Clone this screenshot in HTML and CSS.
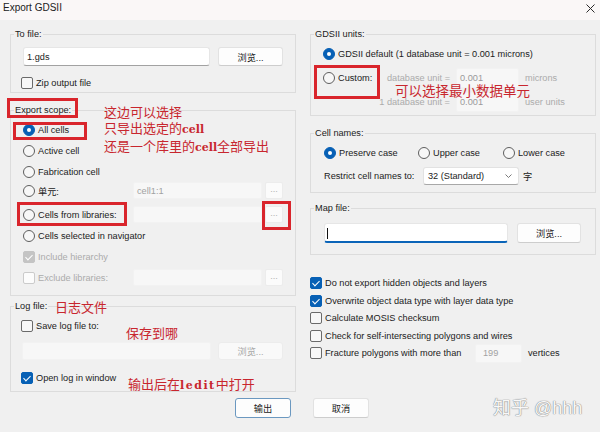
FILE: index.html
```html
<!DOCTYPE html>
<html lang="zh-CN">
  <head>
    <meta charset="UTF-8">
    <title>Export GDSII</title>
    <link rel="stylesheet" href="styles.css">
  </head>
  <body>
    <div class="dialog">
      <div class="titlebar">
        <span class="title">Export GDSII</span>
        <svg class="close" width="9" height="9" viewBox="0 0 9 9">
          <path d="M0.5 0.5L8.5 8.5M8.5 0.5L0.5 8.5" stroke="#2a2a2a" stroke-width="1"/>
        </svg>
      </div>

      <div class="content">
        <div class="column">
          <fieldset class="group file-group">
            <legend>To file:</legend>
            <div class="group-body">
              <div class="file-row">
                <div class="textbox">1.gds</div>
                <button class="btn">浏览...</button>
              </div>
              <div class="option zip-line"><span class="check"></span>Zip output file</div>
            </div>
          </fieldset>

          <fieldset class="group scope-group">
            <legend>Export scope:</legend>
            <div class="group-body">
              <div class="option row"><span class="radio on"></span>All cells</div>
              <div class="option row"><span class="radio"></span>Active cell</div>
              <div class="option row"><span class="radio"></span>Fabrication cell</div>
              <div class="row pick short">
                <span class="option"><span class="radio"></span>单元:</span>
                <span class="field">cell1:1</span>
                <span class="mini-btn">...</span>
              </div>
              <div class="row pick lib">
                <span class="option"><span class="radio"></span>Cells from libraries:</span>
                <span class="field"></span>
                <span class="mini-btn">...</span>
              </div>
              <div class="option row"><span class="radio"></span>Cells selected in navigator</div>
              <div class="option row muted"><span class="check on dim"></span>Include hierarchy</div>
              <div class="row pick">
                <span class="option muted"><span class="check dim"></span>Exclude libraries:</span>
                <span class="field"></span>
                <span class="mini-btn">...</span>
              </div>
            </div>
          </fieldset>

          <fieldset class="group log-group">
            <legend>Log file:</legend>
            <div class="group-body">
              <div class="option log-line"><span class="check"></span>Save log file to:</div>
              <div class="file-row log-file">
                <span class="field"></span>
                <button class="btn" disabled>浏览...</button>
              </div>
              <div class="option log-line open-line"><span class="check on"></span>Open log in window</div>
            </div>
          </fieldset>
        </div>

        <div class="column">
          <fieldset class="group units-group">
            <legend>GDSII units:</legend>
            <div class="group-body units-grid">
              <div class="option span-all"><span class="radio on"></span>GDSII default (1 database unit = 0.001 microns)</div>
              <div class="option"><span class="radio"></span>Custom:</div>
              <span class="muted unit-label">database unit =</span>
              <span class="field">0.001</span>
              <span class="muted">microns</span>
              <span></span>
              <span class="muted unit-label">1 database unit =</span>
              <span class="field">0.001</span>
              <span class="muted">user units</span>
            </div>
          </fieldset>

          <fieldset class="group names-group">
            <legend>Cell names:</legend>
            <div class="group-body">
              <div class="case-row">
                <div class="option"><span class="radio on"></span>Preserve case</div>
                <div class="option"><span class="radio"></span>Upper case</div>
                <div class="option"><span class="radio"></span>Lower case</div>
              </div>
              <div class="restrict-row">
                <span class="restrict-label">Restrict cell names to:</span>
                <div class="select">
                  32 (Standard)
                  <svg width="7" height="4" viewBox="0 0 7 4">
                    <path d="M0.5 0.5L3.5 3.5L6.5 0.5" fill="none" stroke="#6b6b6b" stroke-width="0.9"/>
                  </svg>
                </div>
                <span class="unit-char">字</span>
              </div>
            </div>
          </fieldset>

          <fieldset class="group map-group">
            <legend>Map file:</legend>
            <div class="group-body">
              <div class="map-row">
                <div class="textbox focused"><span class="caret"></span></div>
                <button class="btn">浏览...</button>
              </div>
            </div>
          </fieldset>

          <div class="options">
            <div class="option check-line"><span class="check on"></span>Do not export hidden objects and layers</div>
            <div class="option check-line"><span class="check on"></span>Overwrite object data type with layer data type</div>
            <div class="option check-line"><span class="check"></span>Calculate MOSIS checksum</div>
            <div class="option check-line"><span class="check"></span>Check for self-intersecting polygons and wires</div>
            <div class="option check-line">
              <span class="check"></span>
              <span class="fracture-label">Fracture polygons with more than</span>
              <span class="field count">199</span>
              <span class="vertices">vertices</span>
            </div>
          </div>
        </div>
      </div>

      <div class="footer">
        <button class="btn default">输出</button>
        <button class="btn">取消</button>
      </div>

      <!-- annotations drawn over the dialog -->
      <div class="mark mark-scope"></div>
      <div class="mark mark-all"></div>
      <div class="mark mark-libs"></div>
      <div class="mark mark-libs-btn"></div>
      <div class="mark mark-custom"></div>

      <div class="note note-scope">这边可以选择<br>只导出选定的<b>cell</b><br>还是一个库里的<b>cell</b>全部导出</div>
      <div class="note note-units">可以选择最小数据单元</div>
      <div class="note note-log">日志文件</div>
      <div class="note note-save">保存到哪</div>
      <div class="note note-open">输出后在<b class="wide">ledit</b>中打开</div>

      <div class="watermark">知乎 @hhh</div>
    </div>
  </body>
</html>
```

FILE: styles.css
```css
* {
  box-sizing: border-box;
}

body {
  margin: 0;
  font-family: "Liberation Sans", "Noto Sans CJK SC", Arial, sans-serif;
  font-size: 9.2px;
  color: #1b1b1b;
  background-color: #f0f0f0;
}

.dialog {
  position: relative;
  width: 600px;
  height: 432px;
  overflow: hidden;
  background-color: #f0f0f0;
}

.titlebar {
  display: flex;
  justify-content: space-between;
  height: 20px;
  padding: 2px 5px 0 3px;
  background-color: #faf7f7;
}

.title {
  font-size: 10px;
  line-height: 12px;
}

.close {
  margin-top: 2px;
}

.content {
  display: grid;
  grid-template-columns: 286px 286px;
  column-gap: 14px;
  padding-left: 10px;
}

/* group boxes */
.group {
  margin: 0;
  padding: 0;
  min-width: 0;
  border: 1px solid #dcdcdc;
}

.group legend {
  margin-left: 3px;
  padding: 0 1px;
  line-height: 12px;
}

.group-body {
  padding: 4px 0 3px 12px;
}

.option {
  display: flex;
  align-items: center;
  white-space: nowrap;
}

.muted {
  color: #ababab;
}

/* radios and checkboxes */
.radio,
.check {
  flex: none;
  position: relative;
  width: 12px;
  height: 12px;
  margin-right: 3px;
  border: 1px solid #5e5e5e;
  background-color: #f7f7f7;
}

.radio {
  border-radius: 50%;
}

.radio.on {
  border-color: #0760b5;
  background-color: #0760b5;
}

.radio.on::after {
  content: "";
  position: absolute;
  left: 3px;
  top: 3px;
  width: 4px;
  height: 4px;
  border-radius: 50%;
  background-color: #fff;
}

.check {
  border-radius: 2px;
  border-color: #6a6a6a;
}

.check.on {
  border-color: #0760b5;
  background-color: #0760b5;
}

.check.on::after {
  content: "";
  position: absolute;
  left: 3.3px;
  top: 1px;
  width: 3px;
  height: 6px;
  border: solid #fff;
  border-width: 0 1.2px 1.2px 0;
  transform: rotate(45deg);
}

.check.dim {
  border-color: #cbcbcb;
  background-color: #fcfcfc;
}

.check.on.dim {
  border-color: #c4c4c4;
  background-color: #c4c4c4;
}

/* inputs and buttons */
.textbox {
  position: relative;
  height: 19px;
  padding: 0 3px;
  line-height: 18px;
  background-color: #fff;
  border: 1px solid #e6e6e6;
  border-bottom-color: #a2a2a2;
  border-radius: 3px;
}

.textbox.focused {
  border-bottom: 2px solid #0a64b8;
}

.caret {
  position: absolute;
  left: 2px;
  top: 4px;
  width: 1px;
  height: 11px;
  background-color: #111;
}

.field {
  display: block;
  height: 17px;
  padding: 0 3px;
  line-height: 16px;
  color: #a2a2a2;
  background-color: #f7f7f7;
  border: 1px solid #f2f2f2;
  border-radius: 2px;
}

.btn {
  height: 19px;
  padding: 0;
  font: inherit;
  color: #1b1b1b;
  background-color: #fdfdfd;
  border: 1px solid #e2e2e2;
  border-bottom-color: #cdcdcd;
  border-radius: 3px;
}

.btn:disabled {
  color: #a8a8a8;
  background-color: #f9f9f9;
  border-color: #ececec;
}

.btn.default {
  border: 1px solid #6b98c0;
}

.mini-btn {
  display: block;
  height: 17px;
  line-height: 13px;
  text-align: center;
  color: #b3b3b3;
  background-color: #fbfbfb;
  border: 1px solid #ececec;
  border-radius: 2px;
}

/* left column */
.file-group {
  margin-top: 8px;
}

.file-group .group-body {
  padding: 7px 0 3px 12px;
}

.file-row {
  display: grid;
  grid-template-columns: 187px 65px;
  column-gap: 8px;
  height: 19px;
}

.zip-line {
  height: 12px;
  margin: 11px 0 0 -2px;
}

.scope-group {
  margin-top: 11px;
}

.scope-group .group-body {
  padding: 3px 0 7px 12px;
}

.row {
  height: 21px;
}

.pick {
  display: grid;
  grid-template-columns: 107px 129px 18px;
  column-gap: 3px;
  align-items: center;
}

.pick.short {
  height: 17px;
}

.pick.lib {
  height: 26px;
  padding-top: 5px;
}

.log-group {
  margin-top: 4px;
}

.log-group .group-body {
  padding: 4px 0 3px 10px;
}

.log-line {
  height: 20px;
}

.log-file {
  grid-template-columns: 189px 65px;
  column-gap: 7px;
  height: 18px;
  margin: 6px 0 0 1px;
}

.log-file .field {
  height: 18px;
}

.log-file .btn {
  height: 18px;
}

.open-line {
  margin-top: 8px;
}

/* right column */
.units-group {
  margin-top: 8px;
}

.units-grid {
  display: grid;
  grid-template-columns: 50px 71px 63px auto;
  grid-auto-rows: 20px;
  column-gap: 6px;
  row-gap: 4px;
  align-items: center;
}

.span-all {
  grid-column: 1 / -1;
}

.unit-label {
  text-align: right;
  white-space: nowrap;
}

.units-grid .field {
  height: 20px;
  line-height: 18px;
  color: #9a9a9a;
}

.names-group {
  margin-top: 11px;
}

.names-group .group-body {
  padding: 4px 0 7px 13px;
}

.case-row {
  display: grid;
  grid-template-columns: 94px 85px auto;
  height: 20px;
  align-items: center;
}

.restrict-row {
  display: flex;
  align-items: center;
  height: 18px;
  margin-top: 4px;
}

.restrict-label {
  flex: none;
  width: 99px;
}

.select {
  display: flex;
  justify-content: space-between;
  align-items: center;
  width: 96px;
  height: 18px;
  padding: 0 6px 0 4px;
  background-color: #fff;
  border: 1px solid #e2e2e2;
  border-bottom-color: #a8a8a8;
  border-radius: 3px;
}

.unit-char {
  margin-left: 4px;
}

.map-group {
  margin-top: 9px;
}

.map-group .group-body {
  padding: 9px 0 11px 13px;
}

.map-row {
  display: grid;
  grid-template-columns: 184px 64px;
  column-gap: 9px;
  height: 20px;
}

.map-row .textbox,
.map-row .btn {
  height: 20px;
}

.options {
  margin-top: 19.5px;
}

.check-line {
  height: 17.5px;
}

.fracture-label {
  width: 147px;
}

.field.count {
  width: 47px;
  height: 19px;
  margin-left: 3px;
  padding-left: 7px;
  line-height: 17px;
}

.vertices {
  margin-left: 6px;
}

.footer {
  display: flex;
  justify-content: center;
  gap: 22px;
  margin-top: 6px;
  padding-left: 4px;
}

.footer .btn {
  width: 56px;
  height: 20px;
}

/* red annotation boxes and notes */
.mark {
  position: absolute;
  border: 3px solid #d9252c;
}

.mark-scope { left: 7px; top: 98px; width: 71px; height: 20px; }
.mark-all { left: 13px; top: 122px; width: 74px; height: 18px; }
.mark-libs { left: 17px; top: 202px; width: 110px; height: 24px; }
.mark-libs-btn { left: 262px; top: 201px; width: 29px; height: 29px; }
.mark-custom { left: 314px; top: 65px; width: 66px; height: 34px; }

.note {
  position: absolute;
  font-family: "Noto Sans CJK SC", sans-serif;
  font-size: 13px;
  line-height: 16px;
  color: #c8262e;
  white-space: nowrap;
}

.note b {
  font-family: "DejaVu Serif", serif;
  font-size: 11px;
}

.note b.wide {
  letter-spacing: 1.5px;
}

.note-scope { left: 104px; top: 104px; }
.note-units { left: 395px; top: 82px; font-size: 13.5px; }
.note-log { left: 55px; top: 299px; }
.note-save { left: 126px; top: 325px; }
.note-open { left: 128px; top: 376px; }

.watermark {
  position: absolute;
  left: 493px;
  top: 397px;
  font-size: 18px;
  line-height: 22px;
  color: #f8f8f8;
  text-shadow: 0 0 1px #7e7e7e, 0 0 1px #7e7e7e;
}
```
